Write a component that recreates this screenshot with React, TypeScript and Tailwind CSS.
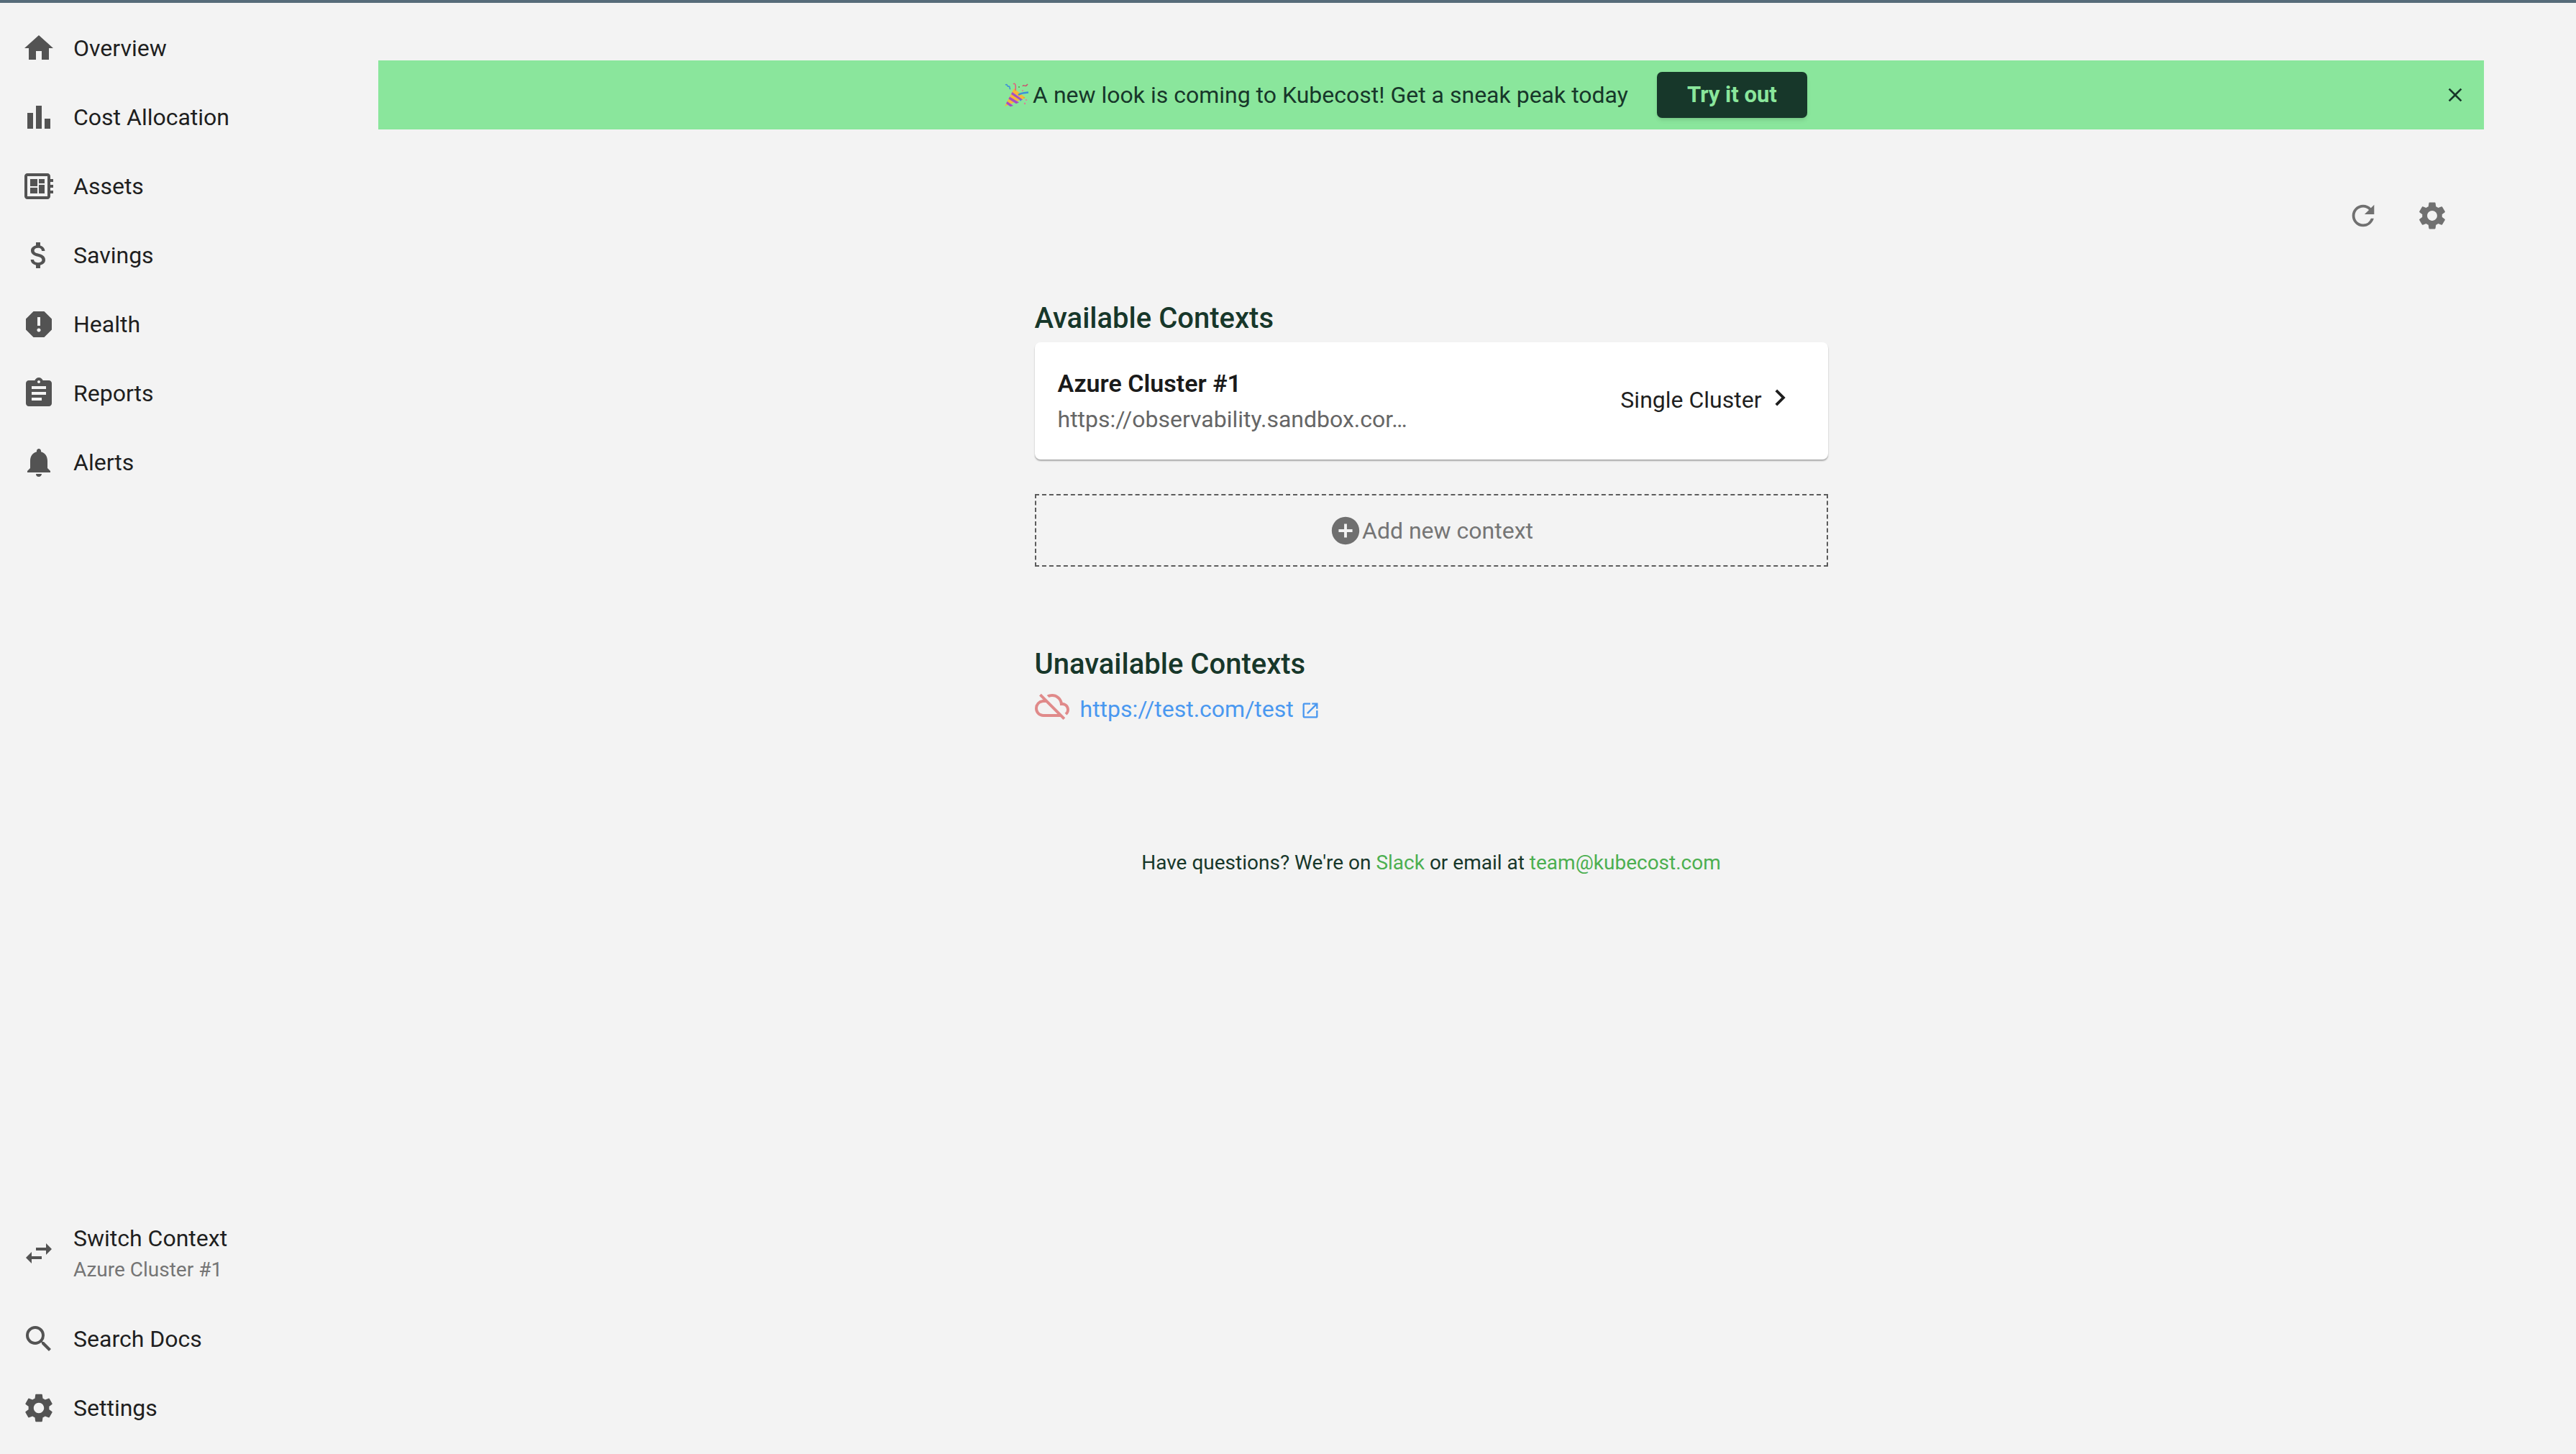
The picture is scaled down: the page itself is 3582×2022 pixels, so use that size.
import type { ReactNode } from "react"
import {
  MdAddCircle,
  MdAssignment,
  MdAttachMoney,
  MdBarChart,
  MdChevronRight,
  MdClose,
  MdDeveloperBoard,
  MdHome,
  MdNotifications,
  MdOpenInNew,
  MdOutlineCloudOff,
  MdRefresh,
  MdReport,
  MdSearch,
  MdSettings,
  MdSwapHoriz,
} from "react-icons/md"

const navTop = [
  { label: "Overview", icon: <MdHome /> },
  { label: "Cost Allocation", icon: <MdBarChart /> },
  { label: "Assets", icon: <MdDeveloperBoard /> },
  { label: "Savings", icon: <MdAttachMoney /> },
  { label: "Health", icon: <MdReport /> },
  { label: "Reports", icon: <MdAssignment /> },
  { label: "Alerts", icon: <MdNotifications /> },
]

function NavItem({ icon, label, sub }: { icon: ReactNode; label: string; sub?: string }) {
  return (
    <div className={`flex items-center pl-[30px] ${sub ? "h-[134px] pb-[8px]" : "h-[96px]"}`}>
      <span className="flex w-[72px] shrink-0 text-[48px] text-[#535353]">{icon}</span>
      <div className="flex flex-col">
        <span className="text-[32px] leading-[44px] text-[#1f1f1f]">{label}</span>
        {sub && <span className="mt-[1px] text-[28px] leading-[42px] text-[#757575]">{sub}</span>}
      </div>
    </div>
  )
}

function PartyPopper() {
  return (
    <svg viewBox="9 8 36 36" className="h-[36px] w-[36px] shrink-0">
      <path d="M11 42 L24 17 L40 30 Z" fill="#f5b83a" />
      <path d="M14.5 35 L23 41 L19 42.3 L13 38 Z" fill="#a24fc7" />
      <path d="M18 28.5 L31 36.5 L27 38.3 L16.4 31.5 Z" fill="#a24fc7" />
      <path d="M21.5 22 L36 32.5 L33.5 34 L20 25 Z" fill="#a24fc7" />
      <path d="M12 12 C16 10 13 15 17 14 C19 14 17 17 19 18" fill="none" stroke="#3f8fd8" strokeWidth="1.6" />
      <path d="M23 11 C25 9 27 11 26 20" fill="none" stroke="#e0607e" strokeWidth="1.6" />
      <path d="M36 14 C38 10 39 17 43 11" fill="none" stroke="#c9566e" strokeWidth="1.5" />
      <path d="M30 26 C34 23 39 23 44 22.5" fill="none" stroke="#3f8fd8" strokeWidth="2.4" />
      <circle cx="31" cy="15" r="1" fill="#5a9a3a" />
      <circle cx="36" cy="20" r="1.1" fill="#e07a9a" />
      <circle cx="33" cy="33.5" r="1" fill="#3f8fd8" />
      <circle cx="38" cy="30" r="1.1" fill="#e8a23a" />
      <circle cx="41" cy="33" r="1.1" fill="#e07a9a" />
      <circle cx="39" cy="38" r="1.2" fill="#e07a9a" />
    </svg>
  )
}

export default function App() {
  return (
    <div className="flex h-[2022px] w-full border-t-[4px] border-[#566b79] bg-[#f3f3f3] font-['Roboto',sans-serif]">
      <aside className="flex w-[526px] shrink-0 flex-col justify-between pt-[15px] pb-[16px]">
        <nav className="flex flex-col">
          {navTop.map((item) => (
            <NavItem key={item.label} icon={item.icon} label={item.label} />
          ))}
        </nav>
        <nav className="flex flex-col">
          <NavItem icon={<MdSwapHoriz />} label="Switch Context" sub="Azure Cluster #1" />
          <NavItem icon={<MdSearch />} label="Search Docs" />
          <NavItem icon={<MdSettings />} label="Settings" />
        </nav>
      </aside>

      <main className="mr-[128px] flex flex-1 flex-col pt-[80px]">
        <div className="relative flex h-[96px] items-center justify-center bg-[#8ae69c] text-[#17372a]">
          <div className="flex items-center pr-[72px]">
            <PartyPopper />
            <span className="ml-[5px] text-[32px]">A new look is coming to Kubecost! Get a sneak peak today</span>
            <button className="ml-[40px] h-[64px] w-[209px] rounded-[7px] bg-[#17372a] text-[31px] font-bold text-[#8ae69c] shadow-md">
              Try it out
            </button>
          </div>
          <MdClose className="absolute right-[24px] top-[32px] text-[32px]" />
        </div>

        <div className="flex justify-end gap-[50px] pt-[97px] pr-[49px] text-[46px] text-[#707070]">
          <MdRefresh />
          <MdSettings />
        </div>

        <section className="mx-auto mt-[94px] flex w-[1103px] flex-col">
          <h2 className="text-[40px] leading-[52px] font-medium text-[#17372a]">Available Contexts</h2>
          <div className="mt-[7px] flex h-[163px] items-center justify-between rounded-[8px] bg-white pr-[44px] pl-[32px] shadow-[0_2px_2px_rgba(0,0,0,0.3)]">
            <div className="flex flex-col">
              <span className="text-[34px] leading-[50px] font-semibold text-[#1a1a1a]">Azure Cluster #1</span>
              <span className="text-[32px] leading-[50px] text-[#666666]">https://observability.sandbox.cor…</span>
            </div>
            <div className="flex items-center gap-[2px]">
              <span className="-mt-[4px] text-[32px] text-[#1f1f1f]">Single Cluster</span>
              <MdChevronRight className="-mt-[10px] text-[46px] text-[#1f1f1f]" />
            </div>
          </div>
          <div className="mt-[48px] flex h-[101px] items-center justify-center gap-0 border-2 border-dashed border-[#5c5c5c] text-[#757575]">
            <MdAddCircle className="text-[46px] text-[#6f6f6f]" />
            <span className="text-[32px]">Add new context</span>
          </div>

          <h2 className="mt-[110px] text-[40px] leading-[52px] font-medium text-[#17372a]">Unavailable Contexts</h2>
          <div className="mt-[12px] flex items-center">
            <MdOutlineCloudOff className="-mt-[10px] text-[48px] text-[#e08a8a]" />
            <a className="ml-[15px] text-[32px] text-[#4a98f0]">https://test.com/test</a>
            <MdOpenInNew className="ml-[9px] mt-[4px] text-[28px] text-[#4a98f0]" />
          </div>

          <p className="mt-[169px] text-center text-[28px] text-[#17372a]">
            Have questions? We're on <a className="text-[#4caf50]">Slack</a> or email at{" "}
            <a className="text-[#4caf50]">team@kubecost.com</a>
          </p>
        </section>
      </main>
    </div>
  )
}
